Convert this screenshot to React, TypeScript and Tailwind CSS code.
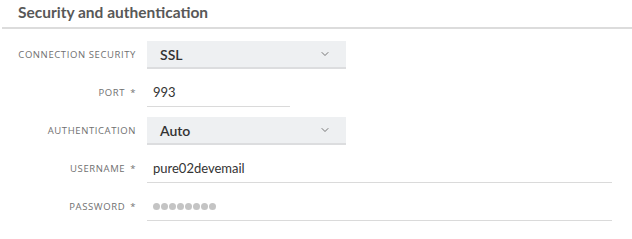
import { ChevronDown } from 'lucide-react';

type Field = {
  label: string;
  required?: boolean;
  kind: 'select' | 'text' | 'password';
  value: string;
  width: string;
};

const fields: Field[] = [
  { label: 'Connection security', kind: 'select', value: 'SSL', width: 'w-[199px]' },
  { label: 'Port', required: true, kind: 'text', value: '993', width: 'w-[143px]' },
  { label: 'Authentication', kind: 'select', value: 'Auto', width: 'w-[199px]' },
  { label: 'Username', required: true, kind: 'text', value: 'pure02devemail', width: 'w-[465px]' },
  { label: 'Password', required: true, kind: 'password', value: '', width: 'w-[465px]' },
];

function Control({ field }: { field: Field }) {
  if (field.kind === 'select') {
    return (
      <div
        className={`${field.width} h-[28px] flex items-center justify-between pl-[13px] pr-[15px] bg-[#eef0f2] border-b-2 border-[#dcdddf] text-[14px] font-semibold text-[#333]`}
      >
        <span>{field.value}</span>
        <ChevronDown size={12} strokeWidth={1.6} className="text-[#555]" />
      </div>
    );
  }
  return (
    <div
      className={`${field.width} h-[28px] flex items-center pl-[6px] border-b border-[#dadada] text-[13px] text-[#333]`}
    >
      {field.kind === 'password' ? (
        <div className="flex gap-[1px]">
          {Array.from({ length: 8 }).map((_, i) => (
            <span key={i} className="w-[7px] h-[7px] rounded-full bg-[#c4c4c4]" />
          ))}
        </div>
      ) : (
        field.value
      )}
    </div>
  );
}

export default function App() {
  return (
    <div className="w-[632px] h-[239px] bg-white font-['Lato',sans-serif]">
      {/* header */}
      <div className="ml-[2px] h-[29px] pl-[16px] pt-[2px] border-b-2 border-[#dcdcdc]">
        <h2 className="text-[15.5px] font-bold text-[#585858] leading-[20px]">Security and authentication</h2>
      </div>

      {/* form rows */}
      <div className="mt-[12px] flex flex-col gap-[10px]">
        {fields.map(f => (
          <div key={f.label} className="flex items-center">
            <div className="w-[136px] shrink-0 text-right uppercase font-['Open_Sans',sans-serif] text-[9.5px] tracking-[0.6px] text-[#707070]">
              {f.label}
              {f.required && <span className="ml-[5px]">*</span>}
            </div>
            <div className="ml-[11px]">
              <Control field={f} />
            </div>
          </div>
        ))}
      </div>
    </div>
  );
}
